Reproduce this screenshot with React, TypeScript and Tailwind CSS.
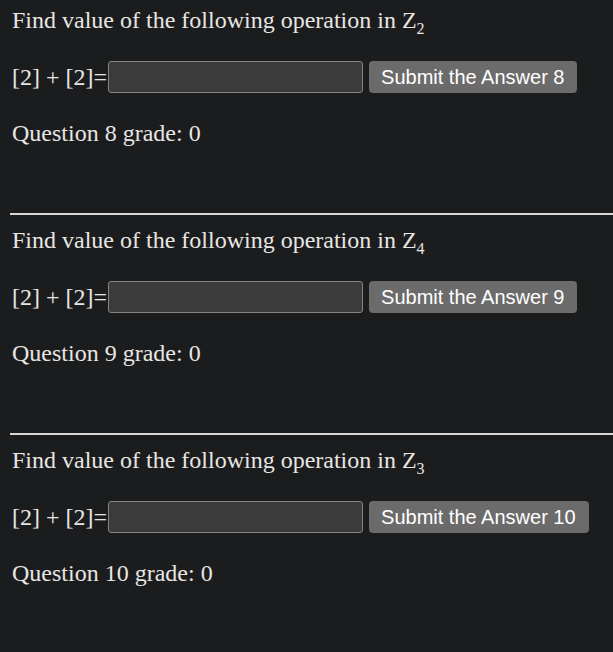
const QUESTIONS = [
  { n: 8, mod: 2 },
  { n: 9, mod: 4 },
  { n: 10, mod: 3 },
];

function Question({ n, mod, last }: { n: number; mod: number; last: boolean }) {
  return (
    <section className="flex flex-col">
      <div className="mt-[6px] h-[28px] pl-3 text-[24px] leading-[28px]">
        Find value of the following operation in Z
        <sub className="text-[16px] leading-none align-[-2px]">{mod}</sub>
      </div>
      <div className="mt-[27px] flex h-[32px] items-center pl-3">
        <span className="text-[24px] leading-[28px]">[2] + [2]=</span>
        <input
          type="text"
          className="ml-[1px] h-[32px] w-[255px] rounded-[3px] border border-[#858585] bg-[#3b3b3b] outline-none"
        />
        <button className="ml-[6px] h-[32px] rounded-[4px] bg-[#6b6b6b] pl-3 pr-[13px] font-['Liberation_Sans',Arial,sans-serif] text-[20px] leading-[32px] text-white">
          Submit the Answer {n}
        </button>
      </div>
      <div className="mt-[26px] h-[28px] pl-3 text-[24px] leading-[28px]">
        Question {n} grade: 0
      </div>
      {!last && <div className="mb-[5px] ml-[10px] mt-[66px] h-[2px] bg-[#d6d6d6]" />}
    </section>
  );
}

export default function App() {
  return (
    <div className="h-[652px] w-[613px] overflow-hidden bg-[#1b1c1e] font-['Liberation_Serif','Times_New_Roman',serif] text-[#e8e6e3]">
      {QUESTIONS.map((q, i) => (
        <Question key={q.n} n={q.n} mod={q.mod} last={i === QUESTIONS.length - 1} />
      ))}
    </div>
  );
}
